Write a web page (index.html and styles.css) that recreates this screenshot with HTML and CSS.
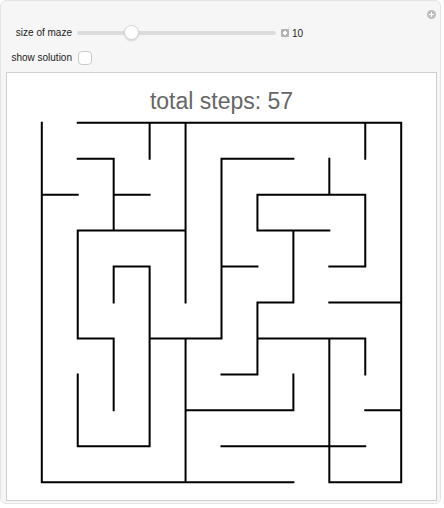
FILE: index.html
```html
<!DOCTYPE html>
<html lang="en">

<head>
    <meta charset="UTF-8">
    <meta name="viewport" content="width=device-width, initial-scale=1.0">
    <title>Maze</title>
    <link rel="stylesheet" href="styles.css">
</head>

<body>
    <div class="panel">
        <span class="corner-btn"></span>
        <div class="controls">
            <label class="ctl-label">size of maze</label>
            <div class="slider-group">
                <div class="slider-track">
                    <span class="slider-thumb"></span>
                </div>
                <span class="plus-btn"></span>
                <span class="slider-value">10</span>
            </div>
            <label class="ctl-label">show solution</label>
            <div class="check-group">
                <span class="checkbox"></span>
            </div>
        </div>
        <div class="output">
            <h1 class="title">total steps: 57</h1>
            <svg class="maze" width="363" height="363" viewBox="-0.05 -0.05 10.1 10.1">
                <path d="M1 0H10V10H8 M7 10H0V0
                    M3 0V1 M4 0V5 M1 1H2V3 M0 2H1 M2 2H3 M1 3H4
                    M1 3V6H2V8 M2 4H3V9H1V7 M2 4V5 M3 6H5 M4 6V10
                    M4 8H7V7 M9 0V1 M7 1H5V6 M8 1V2 M6 3V2H9V4H8
                    M6 3H8 M7 3V5H6V7H5 M5 4H6 M8 5H10 M6 6H9V7
                    M8 6V10 M9 8H10 M5 9H9" />
            </svg>
        </div>
    </div>
</body>

</html>
```

FILE: styles.css
```css
body {
    margin: 0;
    font-family: "Liberation Sans", Arial, sans-serif;
    background-color: #fff;
}

.panel {
    position: relative;
    width: 441px;
    height: 504px;
    box-sizing: border-box;
    padding: 23px 5px 0 5px;
    border: 1px solid #e4e4e4;
    border-radius: 6px;
    background-color: #f6f6f6;
}

.corner-btn {
    position: absolute;
    top: 9px;
    right: 4px;
    width: 9px;
    height: 9px;
    border-radius: 50%;
    background-color: #bdbdbd;
}

.corner-btn::before,
.corner-btn::after {
    content: "";
    position: absolute;
    background-color: #fff;
}

.corner-btn::before {
    left: 2px;
    top: 4px;
    width: 5px;
    height: 1px;
}

.corner-btn::after {
    left: 4px;
    top: 2px;
    width: 1px;
    height: 5px;
}

.controls {
    display: grid;
    grid-template-columns: 65px auto;
    column-gap: 5px;
    row-gap: 7px;
    align-items: center;
    margin-left: 1px;
}

.ctl-label {
    text-align: right;
    font-size: 10px;
    color: #222;
    line-height: 18px;
}

.slider-group {
    display: flex;
    align-items: center;
    height: 18px;
}

.slider-track {
    position: relative;
    width: 199px;
    height: 4px;
    border-radius: 2px;
    background-color: #dcdcdc;
}

.slider-thumb {
    position: absolute;
    left: 47px;
    top: -6px;
    width: 15px;
    height: 15px;
    box-sizing: border-box;
    border-radius: 50%;
    background-color: #fff;
    border: 1px solid #d4d4d4;
    box-shadow: 0 1px 2px rgba(0, 0, 0, 0.15);
}

.plus-btn {
    position: relative;
    width: 8px;
    height: 8px;
    margin-left: 5px;
    border-radius: 1px;
    background-color: #b3b3b3;
}

.plus-btn::before,
.plus-btn::after {
    content: "";
    position: absolute;
    background-color: #fff;
}

.plus-btn::before {
    left: 2px;
    top: 3px;
    width: 4px;
    height: 2px;
}

.plus-btn::after {
    left: 3px;
    top: 2px;
    width: 2px;
    height: 4px;
}

.slider-value {
    margin-left: 3px;
    font-size: 10px;
    color: #222;
}

.check-group {
    display: flex;
    align-items: center;
    height: 18px;
}

.checkbox {
    width: 14px;
    height: 14px;
    margin-left: 1px;
    box-sizing: border-box;
    border: 1px solid #cbcbcb;
    border-radius: 4px;
    background-color: #fff;
}

.output {
    width: 431px;
    height: 429px;
    margin-top: 5px;
    box-sizing: border-box;
    border: 1px solid #cfcfcf;
    background-color: #fff;
    display: flex;
    flex-direction: column;
    align-items: center;
}

.title {
    margin: 14px 0 6px 0;
    font-size: 23px;
    line-height: 28px;
    font-weight: normal;
    color: #666;
}

.maze path {
    fill: none;
    stroke: #000;
    stroke-width: 2px;
    stroke-linecap: square;
    vector-effect: non-scaling-stroke;
}
```
